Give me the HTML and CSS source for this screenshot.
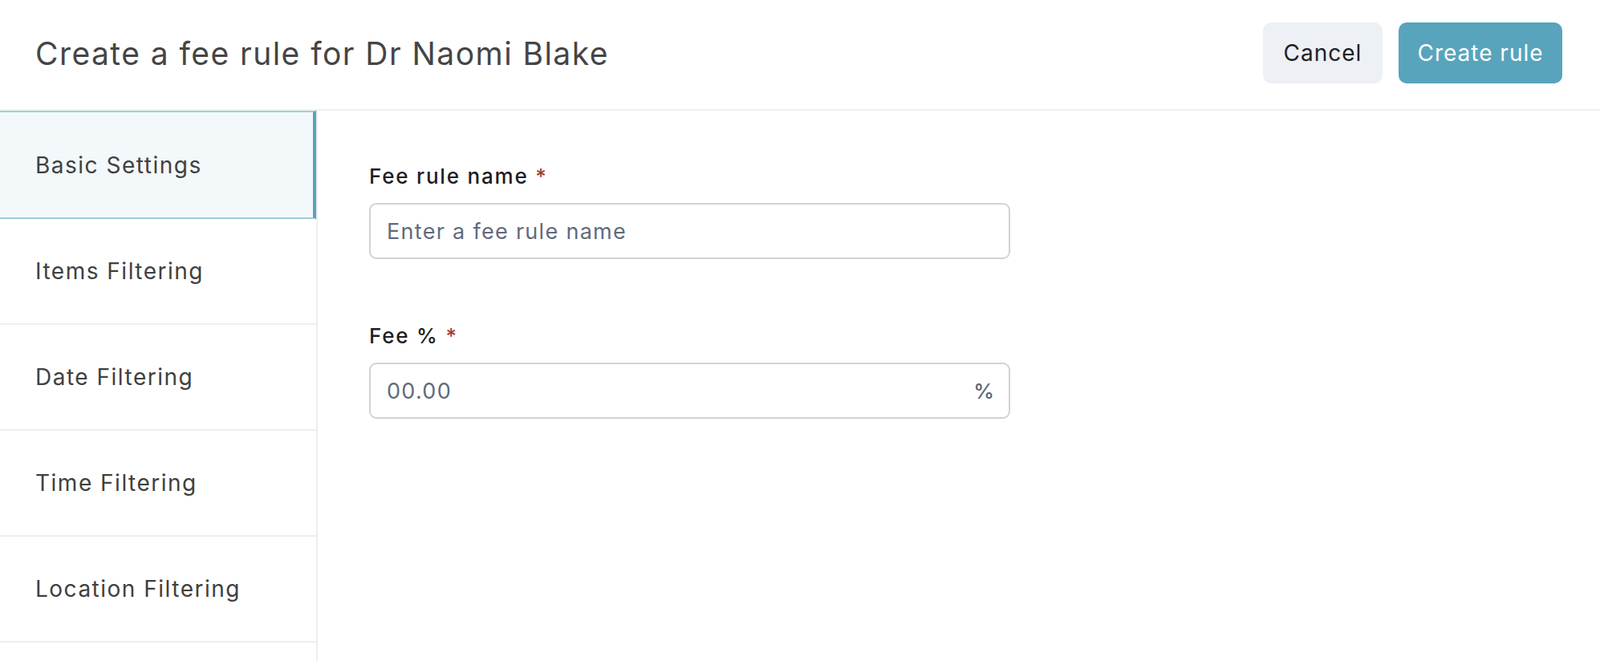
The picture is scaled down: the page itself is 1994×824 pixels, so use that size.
FILE: index.html
```html
<!DOCTYPE html>
<html lang="en">
<head>
<meta charset="utf-8">
<title>Create a fee rule</title>
<link rel="stylesheet" href="styles.css">
</head>
<body>
<header class="topbar">
  <h1 class="title">Create a fee rule for Dr Naomi Blake</h1>
  <div class="actions">
    <button class="btn btn-secondary" type="button">Cancel</button>
    <button class="btn btn-primary" type="button">Create rule</button>
  </div>
</header>
<div class="layout">
  <nav class="sidebar">
    <div class="nav-item active">Basic Settings</div>
    <div class="nav-item">Items Filtering</div>
    <div class="nav-item">Date Filtering</div>
    <div class="nav-item">Time Filtering</div>
    <div class="nav-item">Location Filtering</div>
    <div class="nav-item"></div>
  </nav>
  <main class="content">
    <div class="field">
      <label class="field-label" for="name">Fee rule name <span class="req">*</span></label>
      <div class="input-box">
        <input id="name" class="input" type="text" placeholder="Enter a fee rule name">
      </div>
    </div>
    <div class="field">
      <label class="field-label" for="fee">Fee % <span class="req">*</span></label>
      <div class="input-box">
        <input id="fee" class="input" type="text" placeholder="00.00">
        <span class="suffix">%</span>
      </div>
    </div>
  </main>
</div>
</body>
</html>
```
FILE: styles.css
```css
* { box-sizing: border-box; }
html, body { margin: 0; padding: 0; background: #ffffff; }
body {
  font-family: Inter, "Noto Sans", "Liberation Sans", sans-serif;
  color: #3f3f3f;
  height: 824px;
  overflow: hidden;
}
.topbar {
  height: 138px;
  display: flex;
  align-items: center;
  justify-content: space-between;
  padding: 0 47px 4px 44px;
  border-bottom: 2px solid #efefef;
}
.title {
  margin: 0;
  font-size: 39px;
  font-weight: 400;
  color: #454545;
  letter-spacing: 1.45px;
}
.actions { display: flex; gap: 20px; }
.btn {
  height: 76px;
  border: none;
  border-radius: 10px;
  font-family: inherit;
  font-size: 28px;
  font-weight: 400;
  padding: 0;
  letter-spacing: 1px;
}
.btn-secondary { background: #edf0f5; color: #202124; width: 149px; }
.btn-primary { background: #58a4bc; color: #ffffff; width: 204px; }
.layout { display: flex; height: 686px; }
.sidebar {
  width: 396px;
  border-right: 2px solid #eeeeee;
  display: flex;
  flex-direction: column;
  overflow: hidden;
}
.nav-item {
  height: 132px;
  flex: none;
  display: flex;
  align-items: center;
  padding-left: 44px;
  font-size: 28px;
  letter-spacing: 1.5px;
  color: #404040;
  border-bottom: 2px solid #eeeeee;
}
.nav-item.active {
  height: 135px;
  background: #f3f8fb;
  border-top: 2px solid #9fcfdc;
  border-bottom: 2px solid #9fcfdc;
  border-right: 4px solid #57a3bb;
}
.content {
  flex: 1;
  padding: 64px 0 0 64px;
}
.field { width: 799px; margin-bottom: 78px; }
.field-label {
  display: block;
  height: 36px;
  line-height: 36px;
  margin-bottom: 15px;
  font-size: 26px;
  font-weight: 500;
  letter-spacing: 1.8px;
  color: #1d1d22;
}
.req { color: #a33a2c; }
.input-box {
  height: 70px;
  border: 2px solid #d2d2d2;
  border-radius: 9px;
  display: flex;
  align-items: center;
  padding: 0 18px 0 20px;
}
.input {
  flex: 1;
  border: none;
  outline: none;
  background: transparent;
  font-family: inherit;
  font-size: 27px;
  letter-spacing: 1.3px;
  color: #1d1d22;
  padding: 0;
  height: 100%;
}
.input::placeholder { color: #5f6b7d; opacity: 1; }
.suffix {
  font-size: 26px;
  font-weight: 500;
  color: #5b6777;
}
```
